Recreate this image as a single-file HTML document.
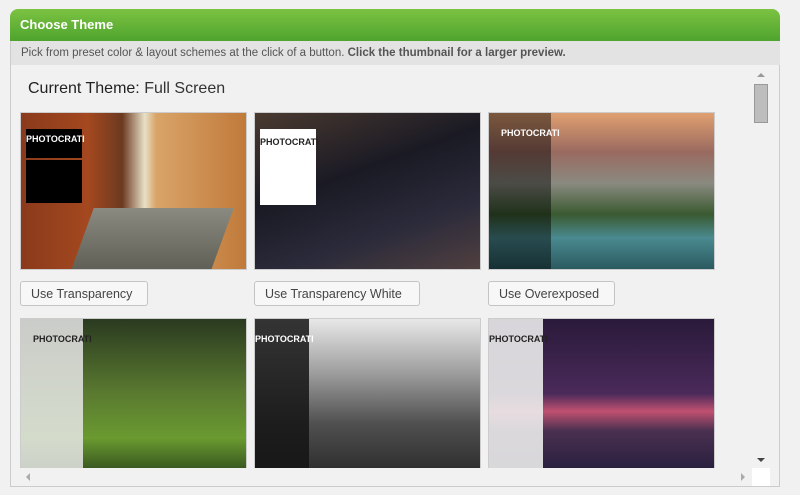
<!DOCTYPE html>
<html><head><style>
body{margin:0;width:800px;height:495px;background:#f1f1f1;font-family:"Liberation Sans",sans-serif;position:relative;overflow:hidden}
.hdr{position:absolute;left:10px;top:9px;width:770px;height:32px;background:linear-gradient(#7cc242,#4ea42e);border-radius:8px 8px 0 0;color:#fff;font-weight:bold;font-size:13px;line-height:32px;text-indent:10px}
.sub{position:absolute;left:10px;top:41px;width:769px;height:24px;background:#e3e3e3;border-left:1px solid #ccc;border-bottom:1px solid #ccc;color:#555;font-size:11.5px;line-height:24px;text-indent:10px}
.box{position:absolute;left:10px;top:65px;width:768px;height:421px;border:1px solid #ccc;border-top:none;background:#f1f1f1;overflow:hidden}
.ttl{position:absolute;left:28px;top:80px;font-size:16px;color:#222}
.t{position:absolute;width:225px;height:156px;border:1px solid #ccc;overflow:hidden}
.r2{height:149px;border-bottom:none}
.b{position:absolute;top:281px;height:25px;border:1px solid #c4c4c4;border-radius:3px;background:#f7f7f7;color:#444;font-size:12.5px;line-height:25px;padding:0 10px;box-sizing:border-box}
.m{position:absolute;background:#000;color:#fff;font-size:7px;text-align:center}
</style></head><body>
<div class="hdr">Choose Theme</div>
<div class="sub">Pick from preset color &amp; layout schemes at the click of a button. <b>Click the thumbnail for a larger preview.</b></div>
<div class="box"></div>
<div class="ttl">Current Theme: <span style="color:#333">Full Screen</span></div>

<div class="t" style="left:20px;top:112px;background:linear-gradient(90deg,#8a3a1c 0%,#a4481f 30%,#6b3a20 45%,#e8e0c8 55%,#d9a468 60%,#c07a3a 100%)">
<div style="position:absolute;left:60px;top:95px;width:140px;height:70px;background:linear-gradient(#8a8a80,#5a5a50);transform:skewX(-20deg)"></div>
<div class="m" style="left:5px;top:16px;width:56px;height:29px;font-weight:bold;font-size:9px;line-height:20px">PHOTOCRATI</div>
<div class="m" style="left:5px;top:47px;width:56px;height:43px"></div></div>
<div class="t" style="left:254px;top:112px;background:linear-gradient(160deg,#4a3a30,#1a1a24 40%,#2a2a3a 70%,#504040)">
<div class="m" style="left:5px;top:16px;width:56px;height:76px;background:#fff;color:#222;font-weight:bold;font-size:9px;line-height:26px">PHOTOCRATI</div></div>
<div class="t" style="left:488px;top:112px;background:linear-gradient(#e0a070,#9a6a60 25%,#8a8a80 45%,#3a5a30 65%,#4a8a90 80%,#2a5a60)">
<div class="m" style="left:0;top:0;width:62px;height:156px;background:rgba(0,0,0,.45);font-weight:bold;font-size:9px;line-height:40px;text-align:left;text-indent:12px">PHOTOCRATI</div></div>

<div class="b" style="left:20px;width:128px">Use Transparency</div>
<div class="b" style="left:254px;width:166px">Use Transparency White</div>
<div class="b" style="left:488px;width:127px">Use Overexposed</div>

<div class="t r2" style="left:20px;top:318px;background:linear-gradient(#2a3a20,#5a7a30 50%,#6a9a30 80%,#3a5a20)">
<div class="m" style="left:0;top:0;width:62px;height:156px;background:rgba(230,230,230,.85);color:#222;font-weight:bold;font-size:9px;line-height:40px;text-align:left;text-indent:12px">PHOTOCRATI</div></div>
<div class="t r2" style="left:254px;top:318px;background:linear-gradient(#e8e8e8,#a0a0a0 35%,#505050 70%,#303030)">
<div class="m" style="left:0;top:0;width:54px;height:156px;background:rgba(20,20,20,.85);font-weight:bold;font-size:9px;line-height:40px">PHOTOCRATI</div></div>
<div class="t r2" style="left:488px;top:318px;background:linear-gradient(#2a1a3a,#4a2a5a 50%,#c05070 62%,#4a3050 75%,#2a2040)">
<div class="m" style="left:0;top:0;width:54px;height:156px;background:rgba(235,235,235,.9);color:#222;font-weight:bold;font-size:9px;line-height:40px">PHOTOCRATI</div></div>

<div style="position:absolute;left:757px;top:73px;width:0;height:0;border:4px solid transparent;border-bottom-color:#999;border-top:none"></div>
<div style="position:absolute;left:754px;top:84px;width:12px;height:37px;background:#bdbdbd;border:1px solid #999"></div>
<div style="position:absolute;left:757px;top:458px;width:0;height:0;border:4px solid transparent;border-top-color:#444;border-bottom:none"></div>
<div style="position:absolute;left:741px;top:473px;width:0;height:0;border:4px solid transparent;border-left-color:#aaa;border-right:none"></div>
<div style="position:absolute;left:26px;top:473px;width:0;height:0;border:4px solid transparent;border-right-color:#aaa;border-left:none"></div>
<div style="position:absolute;left:752px;top:468px;width:18px;height:18px;background:#fff"></div>
</body></html>
